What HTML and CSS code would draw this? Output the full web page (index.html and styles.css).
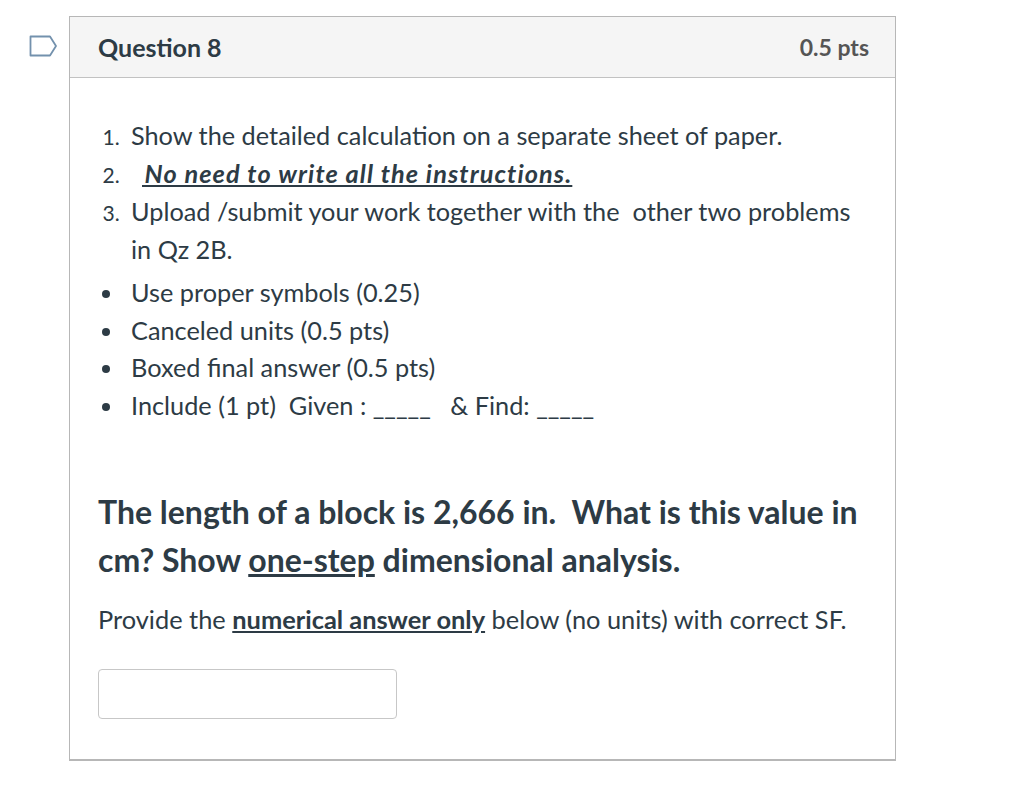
FILE: index.html
```html
<!DOCTYPE html>
<html>
<head>
<meta charset="utf-8">
<link rel="stylesheet" href="styles.css">
</head>
<body>
<div class="page">
  <div class="flag">
    <svg width="29" height="22" viewBox="0 0 29 22"><path d="M1.5 1.5 H21 L27 11 L21 20.5 H1.5 Z" fill="none" stroke="#7391ad" stroke-width="1.8" stroke-linejoin="round"/></svg>
  </div>
  <div class="card">
    <div class="header">
      <span class="title">Question 8</span>
      <span class="pts">0.5 pts</span>
    </div>
    <div class="body">
      <ol class="steps">
        <li>Show the detailed calculation on a separate sheet of paper.</li>
        <li><span class="em">&#8202;No need to write all the instructions.</span></li>
        <li>Upload /submit your work together with the &nbsp;other two problems in Qz 2B.</li>
      </ol>
      <ul class="bullets">
        <li>Use proper symbols (0.25)</li>
        <li>Canceled units (0.5 pts)</li>
        <li>Boxed final answer (0.5 pts)</li>
        <li>Include (1 pt) &nbsp;Given : _____ &nbsp; &amp; Find: _____</li>
      </ul>
      <p class="q">The length of a block is 2,666 in. &nbsp;What is this value in cm? Show <u>one-step</u> dimensional analysis.</p>
      <p class="note">Provide the <u><b>numerical answer only</b></u> below (no units) with correct SF.</p>
      <input class="answer" type="text">
    </div>
  </div>
</div>
</body>
</html>
```
FILE: styles.css
```css
html, body { margin: 0; padding: 0; background: #fff; }
body { font-family: Lato, "Noto Sans", sans-serif; color: #2d3b45; }
.page { display: flex; padding: 16px 0 0 29px; }
.flag { width: 40px; padding-top: 19px; }
.card {
  width: 827px;
  height: 745px;
  border: 1px solid #b7b7b7;
  border-bottom-width: 2px;
  box-sizing: border-box;
}
.header {
  height: 61px;
  background: #f5f5f5;
  border-bottom: 1px solid #c2c2c2;
  box-sizing: border-box;
  display: flex;
  align-items: center;
  justify-content: space-between;
  padding: 0 26px 0 28px;
}
.title { font-size: 25px; font-weight: 700; color: #2d3b45; }
.pts { font-size: 23px; font-weight: 700; color: #555; }
.body { padding: 38px 28px 0 28px; }
.steps, .bullets { margin: 0; padding-left: 27px; font-size: 25.3px; }
.steps li, .bullets li { padding-left: 6px; }
.steps li { line-height: 38px; }
.steps li::marker { font-size: 21px; }
.em {
  display: inline-block;
  margin-left: 11px;
  font-style: italic;
  font-weight: 700;
  letter-spacing: 1.1px;
  text-decoration: underline;
}
.bullets { margin-top: 6px; }
.bullets li { line-height: 37.7px; }
.q { margin: 63px 0 0; font-size: 32px; font-weight: 700; line-height: 48px; }
.note { margin: 19px 0 0; font-size: 25.4px; line-height: 32px; }
.answer {
  display: block;
  margin-top: 34px;
  width: 299px;
  height: 50px;
  box-sizing: border-box;
  border: 1px solid #c7c7c7;
  border-radius: 4px;
}
```
